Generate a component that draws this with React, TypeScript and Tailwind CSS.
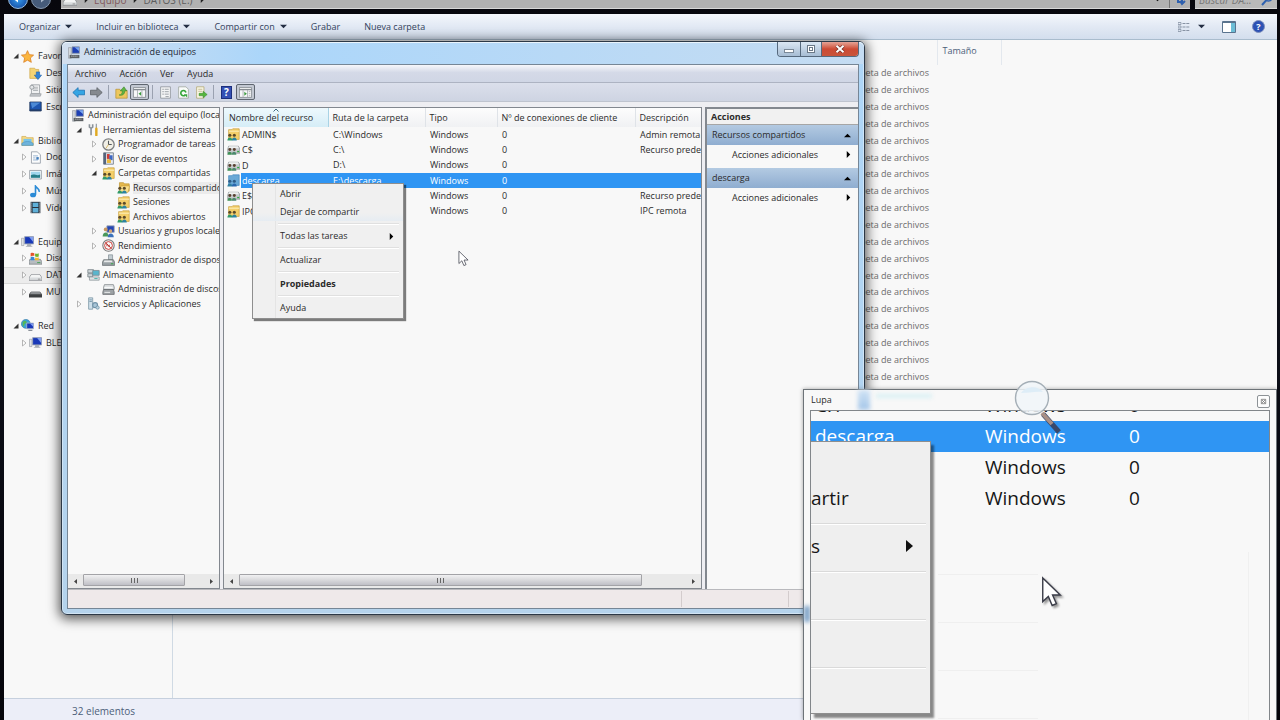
import React from "react";

type IconProps = { className?: string };
type IconType = (p: IconProps) => React.ReactElement;

function make(children: React.ReactNode): IconType {
  return function Icon({ className }: IconProps) {
    return (
      <svg viewBox="0 0 16 16" aria-hidden="true" className={`shrink-0 ${className ?? "size-[13px]"}`}>
        {children}
      </svg>
    );
  };
}

const people = (
  <>
    <circle cx="3.500" cy="9" r="1.900" fill="#5a4a2a" />
    <path d="M.5 15.500c0-5 6-5 6 0z" fill="#2f9a6a" />
    <circle cx="9" cy="9" r="1.900" fill="#5a4a2a" />
    <path d="M6 15.500c0-5 6-5 6 0z" fill="#2c83a0" />
  </>
);

const ConsoleIcon = make(
  <>
    <path d="M0.5 2h3.500v13H0.5z" fill="#d5d9dd" stroke="#8a9096" strokeWidth=".7" />
    <path d="M5 1h9v8H5z" fill="#1d3fb4" stroke="#8f98a6" />
    <path d="M8 1.500h5.500V6z" fill="#7aa6ee" />
    <path d="M2 11h12v4H2z" fill="#5c6063" />
    <path d="M4 12.500h8" stroke="#d8dadc" strokeDasharray="1.500 1" />
  </>
);
const ToolsIcon = make(
  <>
    <path d="M5 6v9M3 1.500v3.500l2 1.500 2-1.500V1.500" fill="none" stroke="#8b9299" strokeWidth="2" />
    <path d="M11.500 1v6" stroke="#9aa1a8" strokeWidth="1.600" />
    <path d="M11.500 7v8" stroke="#e0a921" strokeWidth="3" strokeLinecap="round" />
  </>
);
const ClockIcon = make(
  <>
    <circle cx="8" cy="8" r="7" fill="#f1efe6" stroke="#7d7f80" strokeWidth="1.600" />
    <path d="M8 3.500V8h4" fill="none" stroke="#545a60" strokeWidth="1.300" />
    <path d="M8 8l-3 4.500" stroke="#d1ae4d" />
  </>
);
const EventIcon = make(
  <>
    <path d="M2 1h12v14H2z" fill="#e9ecf2" stroke="#6d7683" />
    <path d="M2 1h3v14H2z" fill="#55657e" />
    <path d="M6 2.500h3.500v6H6z" fill="#cf3c35" />
    <path d="M9 4h4v6H9z" fill="#3e68c4" />
    <path d="M6 9h5v4.500H6z" fill="#e9b83b" />
  </>
);
const SharedFolderIcon = make(
  <>
    <path d="M2 2h4l1-1h8v13H2z" fill="#f4cf6a" stroke="#c59a35" strokeWidth=".8" />
    <path d="M2.500 4h12.500" stroke="#fbe8a8" strokeWidth="1.600" />
    {people}
  </>
);
const OpenSharedIcon = make(
  <>
    <path d="M3 2h5l1 1.500h6v9H3z" fill="#e5b84e" stroke="#b98f2c" strokeWidth=".8" />
    <path d="M5 6h10.500l-2 8H2z" fill="#fadf8c" stroke="#c59a35" strokeWidth=".7" />
    {people}
  </>
);
const SelectedFolderIcon = make(
  <>
    <path d="M2 2h4l1-1h8v13H2z" fill="#6aa9d6" stroke="#4083bb" strokeWidth=".8" />
    <circle cx="3.500" cy="9" r="1.900" fill="#2f5c86" />
    <path d="M.5 15.500c0-5 6-5 6 0z" fill="#2f7fa0" />
    <circle cx="9" cy="9" r="1.900" fill="#2f5c86" />
    <path d="M6 15.500c0-5 6-5 6 0z" fill="#2a68ae" />
  </>
);
const SharedDriveIcon = make(
  <>
    <path d="M2 4h12l2 3.500v5H1v-5z" fill="#c6cacd" stroke="#777d82" strokeWidth=".8" />
    <path d="M2.500 4h11l1 2.500h-13z" fill="#eef0f1" />
    <path d="M12.500 10.500h2.500" stroke="#2fa83e" strokeWidth="1.600" />
    <circle cx="3.500" cy="8" r="1.800" fill="#5a4130" />
    <path d="M.5 14.500c0-5 5.500-5 5.500 0z" fill="#3f8f57" />
    <circle cx="9" cy="8" r="1.800" fill="#5a4130" />
    <path d="M6 14.500c0-5 5.500-5 5.500 0z" fill="#4b8a6c" />
  </>
);
const UsersIcon = make(
  <>
    <path d="M6 1h9v8H6z" fill="#2547b4" stroke="#98a1b0" />
    <circle cx="4.500" cy="5.500" r="2.300" fill="#c99760" />
    <path d="M.8 14c0-6.500 7.400-6.500 7.400 0z" fill="#49985b" />
    <circle cx="10.500" cy="7.500" r="2.200" fill="#d6a773" />
    <path d="M7 15c0-6 7.500-6 7.500 0z" fill="#3c72bb" />
  </>
);
const PerfIcon = make(
  <>
    <circle cx="8" cy="8" r="7" fill="#fafafa" stroke="#777" strokeWidth="1.300" />
    <circle cx="8" cy="8" r="4.800" fill="none" stroke="#c93b35" strokeWidth="1.200" />
    <path d="M4.500 4.500l7 7M6 9V6l3 4V7" fill="none" stroke="#b9302c" strokeWidth="1" />
  </>
);
const DeviceIcon = make(
  <>
    <path d="M8 1h5v6H8z" fill="#c3cdd2" stroke="#7a858c" strokeWidth=".8" />
    <path d="M2 7h12l1.500 3v4H.5v-4z" fill="#9aa1a5" stroke="#5b6165" strokeWidth=".8" />
    <path d="M3 8h9l1 2H2z" fill="#e7e9ea" />
    <path d="M11 12h3" stroke="#37a648" strokeWidth="1.200" />
  </>
);
const StorageIcon = make(
  <>
    <path d="M1 2h7v4H1zM1 7h6v4H1z" fill="#cfd6d9" stroke="#6f7a80" strokeWidth=".9" />
    <path d="M7 3h8v6H7z" fill="#59b5cd" stroke="#7b8a91" />
    <path d="M3 11h12v4H3z" fill="#dfe3e5" stroke="#7c868c" strokeWidth=".8" />
    <path d="M9 13h4" stroke="#2aa9a0" />
  </>
);
const DisksIcon = make(
  <>
    <path d="M3 2h11l1 3v3H2V5z" fill="#dfe2e4" stroke="#6c7276" strokeWidth=".8" />
    <path d="M2 8h12l1 3v3H1v-3z" fill="#9da2a5" stroke="#565b5e" strokeWidth=".8" />
    <path d="M3 5.500h10M3 11.500h7" stroke="#fff" />
  </>
);
const ServicesIcon = make(
  <>
    <path d="M2 1h5v14H2z" fill="#cfe0ea" stroke="#7e97a6" />
    <path d="M3 3.500h3M3 5.500h3" stroke="#6b8ca0" />
    <circle cx="10" cy="10" r="3" fill="#a8c5d7" stroke="#6f92a8" strokeWidth="1.400" />
    <circle cx="13" cy="13" r="2" fill="#bcd3e0" stroke="#6f92a8" />
  </>
);
const StarIcon = make(
  <path d="M8 .8l2.200 4.900 5.300.6-4 3.600 1.200 5.300L8 12.500l-4.700 2.700 1.200-5.300-4-3.600 5.300-.6z" fill="#fbb640" stroke="#d9781c" strokeWidth=".9" />
);
const DownloadIcon = make(
  <>
    <path d="M1 1.500h6l1 1.500h4v11H1z" fill="#f4d474" stroke="#cda440" strokeWidth=".8" />
    <path d="M9 6h4v4h2.500L11 15.500 6.500 10H9z" fill="#2f83d8" stroke="#1d5fa8" strokeWidth=".7" />
  </>
);
const RecentIcon = make(
  <>
    <path d="M3 1h10v11H3z" fill="#f0f1f2" stroke="#989da1" />
    <path d="M5 4h6M5 6h6M5 8h6" stroke="#a4a9ad" />
    <circle cx="3.500" cy="4" r="2.500" fill="#e5e7e9" stroke="#8c9296" />
    <path d="M2 12h13l-1 3H1z" fill="#c4c8cb" stroke="#8c9296" strokeWidth=".7" />
  </>
);
const DesktopIcon = make(
  <>
    <path d="M1 2.500h14v11H1z" fill="#1e56b0" stroke="#1a3157" />
    <path d="M2 3l12 0-10 7z" fill="#4c8ad6" />
    <path d="M1 12.500h14" stroke="#233d68" strokeWidth="2" />
  </>
);
const LibraryIcon = make(
  <>
    <path d="M1 3h5l1 1.500h8V14H1z" fill="#f5d982" stroke="#cda84c" strokeWidth=".8" />
    <path d="M3 6h10v5H3z" fill="#79c4ea" />
    <path d="M1 11.500c4-3 10-3 14 0V14H1z" fill="#6fb4dc" stroke="#4d93bd" strokeWidth=".7" />
  </>
);
const DocIcon = make(
  <>
    <path d="M3 1h7l4 3.500V15H3z" fill="#fbfcfd" stroke="#9099a2" />
    <path d="M5 6h6M5 8.500h3M5 11h6" stroke="#85a3c4" />
    <path d="M9 7.500h3v3H9z" fill="#3f7dbb" />
  </>
);
const ImageIcon = make(
  <>
    <path d="M.8 3h14.400v10.500H.8z" fill="#fff" stroke="#8b949c" />
    <path d="M2.300 4.500h11.400V12H2.300z" fill="#9fd5ec" />
    <path d="M2.300 9c4-3 7 1.500 11.400-1V12H2.300z" fill="#267d88" />
  </>
);
const MusicIcon = make(
  <>
    <path d="M8 12V1.500c2 3 5 2.500 4.500 7" fill="none" stroke="#2b8bd6" strokeWidth="2" />
    <ellipse cx="5" cy="12.300" rx="3.700" ry="2.800" fill="#2b8bd6" />
  </>
);
const VideoIcon = make(
  <>
    <path d="M2 1h12v14H2z" fill="#26323e" />
    <path d="M4.500 2h7v5.500h-7zM4.500 8.500h7V14h-7z" fill="#5fb0d8" />
    <path d="M3.200 2v13M12.800 2v13" stroke="#d6dce0" strokeDasharray="1.200 1.200" />
  </>
);
const PcIcon = make(
  <>
    <path d="M.6 4h3v9h-3z" fill="#dfe2e6" stroke="#8f959c" strokeWidth=".7" />
    <path d="M4.500 2h11v9h-11z" fill="#1838b8" stroke="#9aa3b3" />
    <path d="M10 2.500h5v6z" fill="#809ef0" />
    <path d="M8 11.500h4v2H8zM6 14h8" fill="#a8adb5" stroke="#a8adb5" />
  </>
);
const WindowsDriveIcon = make(
  <>
    <path d="M1 9h13l2 3v3H0v-3z" fill="#b7bcc0" stroke="#73787c" strokeWidth=".8" />
    <path d="M2 1.500c2-1 3-.5 4.500 0V5C5 4.500 4 4.500 2 5.500z" fill="#e5532d" />
    <path d="M7.500 1.800c2 .7 3 .5 4.500-.3v4c-1.500.8-2.500.8-4.500 0z" fill="#6fb42f" />
    <path d="M2 6.500c2-1 3-.5 4.500 0V10H2z" fill="#3a87d6" />
    <path d="M7.500 6.700c2 .7 3 .5 4.500-.3V10H7.500z" fill="#f2b92d" />
    <path d="M10 13h4" stroke="#36a148" />
  </>
);
const DriveIcon = make(
  <>
    <path d="M2.500 7h11L16 11v3H0v-3z" fill="#d9dcde" stroke="#7c8185" strokeWidth=".8" />
    <path d="M3 7.500h10l2 3H1z" fill="#f3f4f4" />
    <path d="M11 12.500h3" stroke="#888" />
  </>
);
const UsbIcon = make(
  <>
    <path d="M2.500 7h11L16 10v4H0v-4z" fill="#3d3f41" />
    <path d="M3 7h10l2 3H1z" fill="#8d9093" />
  </>
);
const NetworkIcon = make(
  <>
    <circle cx="6" cy="6" r="5.500" fill="#3aa0dc" stroke="#23729f" strokeWidth=".7" />
    <path d="M2 4c2-3 5-2 5 0s-3 1-3 4-2 0-2-1z" fill="#55b757" />
    <path d="M7 5h8.500v7H7z" fill="#1838b8" stroke="#b2bac8" />
    <path d="M11 5.500h4v4z" fill="#809ef0" />
    <path d="M9 14h5" stroke="#8a9098" strokeWidth="1.500" />
  </>
);

const BackArrow = make(<path d="M1 8l6.500-6v3.200H15.500v5.600H7.500V14z" fill="#35a5e4" stroke="#1d74b4" />);
const ForwardArrow = make(<path d="M15 8L8.500 2v3.200H.5v5.600h8V14z" fill="#85898f" stroke="#5d6166" />);
const FolderUpIcon = make(
  <>
    <path d="M1 4h5l1 1.500h8V15H1z" fill="#edc75d" stroke="#b38d2d" strokeWidth=".8" />
    <path d="M5 11c3 0 4-2 4-5H6.500L11 1l3.500 5H12c0 4-3 6.500-7 5z" fill="#5fb545" stroke="#3c8228" strokeWidth=".7" />
  </>
);
const PropsIcon = make(
  <>
    <path d="M2 1h12v14H2z" fill="#f4f5f6" stroke="#8d9399" />
    <path d="M4 4h2M7 4h5M4 7h2M7 7h5M4 10h2M7 10h5M8 13h4" stroke="#8d9399" />
  </>
);
const RefreshIcon = make(
  <>
    <path d="M2 1h9l3 3v11H2z" fill="#fafbfa" stroke="#a0a7a0" />
    <path d="M11 8a3.200 3.200 0 1 0-1 3.200" fill="none" stroke="#36a63a" strokeWidth="2" />
    <path d="M8.500 10h4v4z" fill="#36a63a" />
  </>
);
const ExportIcon = make(
  <>
    <path d="M2 1h9v14H2z" fill="#fbf8e6" stroke="#b1a978" />
    <path d="M4 4h5M4 6.500h5" stroke="#b9b189" />
    <path d="M5 9h5V6.500l5 4-5 4V12H5z" fill="#55b63f" stroke="#35832a" strokeWidth=".6" />
  </>
);
const PaneIcon = make(
  <>
    <path d="M.5 2h15v12H.5z" fill="#f7f8f9" stroke="#80868c" />
    <path d="M.5 4.500h15" stroke="#80868c" strokeWidth="1.500" />
    <path d="M5.500 5v9M11 5v9" stroke="#a3a8ad" />
    <path d="M10 7v5L6.800 9.500z" fill="#3b9b3d" />
  </>
);
const PaneRightIcon = make(
  <>
    <path d="M.5 2h15v12H.5z" fill="#f7f8f9" stroke="#80868c" />
    <path d="M.5 4.500h15" stroke="#80868c" strokeWidth="1.500" />
    <path d="M5 5v9M10.500 5v9" stroke="#a3a8ad" />
    <path d="M6.500 7v5l3.200-2.500z" fill="#3b9b3d" />
    <path d="M12 7h2M12 9.500h2M12 12h2" stroke="#8a9095" strokeWidth=".8" />
  </>
);

function Arrow({ open }: { open?: boolean }) {
  return (
    <svg viewBox="0 0 6 8" aria-hidden="true" className="h-2 w-1.5 shrink-0">
      {open ? (
        <path d="M5.500 1.500v5h-5z" fill="#333" />
      ) : (
        <path d="M1.500 1l3.500 3-3.500 3z" fill="#fff" stroke="#a3a3a3" strokeWidth=".8" />
      )}
    </svg>
  );
}
function Tri({ dir, className = "text-black" }: { dir: "up" | "down" | "left" | "right"; className?: string }) {
  const d = { up: "M0 6l4-4 4 4z", down: "M0 2h8L4 6z", left: "M6 0v8L2 4z", right: "M2 0l4 4-4 4z" }[dir];
  return (
    <svg viewBox="0 0 8 8" aria-hidden="true" className={`size-[7px] shrink-0 fill-current ${className}`}>
      <path d={d} />
    </svg>
  );
}
function Pointer({ className }: IconProps) {
  return (
    <svg viewBox="0 0 12 18" aria-hidden="true" className={className}>
      <path d="M1 1v13.500l3.200-3 2.200 5.200 2.400-1-2.200-5h4.400z" fill="#fff" stroke="#3a3c48" strokeWidth=".8" />
    </svg>
  );
}

/* ---------- Explorer window ---------- */

type Node = { t: string; icon: IconType; lvl: number; open?: boolean; leaf?: boolean; sel?: boolean } | null;

const places: Node[] = [
  { t: "Favoritos", icon: StarIcon, lvl: 0, open: true },
  { t: "Descargas", icon: DownloadIcon, lvl: 1, leaf: true },
  { t: "Sitios recientes", icon: RecentIcon, lvl: 1, leaf: true },
  { t: "Escritorio", icon: DesktopIcon, lvl: 1, leaf: true },
  null,
  { t: "Bibliotecas", icon: LibraryIcon, lvl: 0, open: true },
  { t: "Documentos", icon: DocIcon, lvl: 1 },
  { t: "Imágenes", icon: ImageIcon, lvl: 1 },
  { t: "Música", icon: MusicIcon, lvl: 1 },
  { t: "Vídeos", icon: VideoIcon, lvl: 1 },
  null,
  { t: "Equipo", icon: PcIcon, lvl: 0, open: true },
  { t: "Disco local (C:)", icon: WindowsDriveIcon, lvl: 1 },
  { t: "DATOS (E:)", icon: DriveIcon, lvl: 1, sel: true },
  { t: "MULTIMEDIA (F:)", icon: UsbIcon, lvl: 1 },
  null,
  { t: "Red", icon: NetworkIcon, lvl: 0, open: true },
  { t: "BLESS", icon: PcIcon, lvl: 1 },
];

function Explorer() {
  return (
    <section aria-label="Explorador" className="absolute inset-0 flex flex-col pr-[3px] pl-[4px]">
      <div className="flex h-[14px] shrink-0 items-end overflow-hidden pb-[5px]">
        <button aria-label="Atrás" className="ml-1 size-5 shrink-0 rounded-full border border-[#9cc0e0] bg-radial from-[#3aa0f0] to-[#123a94]">
          <svg viewBox="0 0 20 20"><path d="M4 9l6-5v3h6v4h-6v3z" fill="#fff" /></svg>
        </button>
        <button aria-label="Adelante" className="ml-[3px] size-5 shrink-0 rounded-full border border-[#8799b0] bg-[#465b7a]">
          <svg viewBox="0 0 20 20"><path d="M16 9l-6-5v3H4v4h6v3z" fill="#a9b8cc" /></svg>
        </button>
        <div className="ml-2.5 flex h-[18px] min-w-0 flex-1 items-center border-b border-[#d8d8d8] bg-[#b1b1b1] text-[10px] text-[#5d5d5d]">
          <DriveIcon className="ml-0.5 size-[14px]" />
          <Tri dir="right" className="ml-1.5 text-[#222]" />
          <a href="#equipo" className="ml-1 text-[#80585c]">Equipo</a>
          <Tri dir="right" className="ml-1.5 text-[#222]" />
          <a href="#datos" className="ml-1">DATOS (E:)</a>
          <Tri dir="right" className="ml-1.5 text-[#222]" />
          <span className="flex-1" />
          <Tri dir="down" className="mr-2 text-[#111]" />
          <button aria-label="Actualizar" className="flex h-full w-[21px] items-center justify-center border-l border-[#777]">
            <svg viewBox="0 0 12 12" className="size-3"><path d="M1 4h3v4l3 0M8 2v7M6 7l2 3 3-3" fill="none" stroke="#2d5fae" strokeWidth="2" /></svg>
          </button>
        </div>
        <div className="ml-[5px] flex h-[18px] w-[82px] items-center border-b border-[#d8d8d8] bg-[#b9b9b9] px-1">
          <input aria-label="Buscar" placeholder="Buscar DA..." className="w-full min-w-0 bg-transparent text-[10px] italic placeholder:text-[#777]" />
          <svg viewBox="0 0 12 12" className="size-3 shrink-0"><circle cx="7.500" cy="4" r="3" fill="none" stroke="#2f62b0" strokeWidth="1.500" /><path d="M5.500 6L1 11" stroke="#2f62b0" strokeWidth="2" /></svg>
        </div>
      </div>

      <div className="flex h-[26px] shrink-0 items-center border-b border-[#a9bccd] bg-linear-to-b from-[#f4f7fc] via-[#e2e9f4] to-[#d3deed] pl-[15px] text-[#33425c]">
        <button className="flex items-center gap-[5px]">Organizar <Tri dir="down" className="text-[#222d42]" /></button>
        <button className="ml-6 flex items-center gap-[5px]">Incluir en biblioteca <Tri dir="down" className="text-[#222d42]" /></button>
        <button className="ml-6 flex items-center gap-[5px]">Compartir con <Tri dir="down" className="text-[#222d42]" /></button>
        <button className="ml-6">Grabar</button>
        <button className="ml-6">Nueva carpeta</button>
        <span className="flex-1" />
        <button aria-label="Cambiar la vista" className="flex items-center gap-2">
          <svg viewBox="0 0 12 12" className="size-3"><path d="M0 1.500h3v2H0zM0 5h3v2H0zM0 8.500h3v2H0z" fill="none" stroke="#8792a3" strokeWidth=".8" /><path d="M4.500 2.500h7M4.500 6h7M4.500 9.500h7" stroke="#8792a3" strokeDasharray="3 .8" /></svg>
          <Tri dir="down" className="text-[#222d42]" />
        </button>
        <button aria-label="Panel de vista previa" className="ml-[17px]">
          <svg viewBox="0 0 14 12" className="h-3 w-[14px]"><path d="M.5.500h13v11H.5z" fill="#fff" stroke="#59738e" /><path d="M9 1h4v10H9z" fill="#6cbdd6" /><path d="M.5 1.500h13" stroke="#59738e" /></svg>
        </button>
        <button aria-label="Ayuda" className="mr-3 ml-4 flex size-[13px] items-center justify-center rounded-full border border-[#7f90bd] bg-[#2c51b4] text-[9px] leading-none font-bold text-white">?</button>
      </div>

      <div className="flex min-h-0 flex-1 bg-[#f8f8f8]">
        <nav aria-label="Carpetas" className="w-[169px] shrink-0 overflow-hidden border-r border-[#d0dae4] pt-2">
          <ul className="grid h-[303px] auto-rows-fr">
            {places.map((n, i) =>
              n ? (
                <li key={i}>
                  <button className={`flex size-full items-center whitespace-nowrap ${n.lvl ? "pl-[17px]" : "pl-[9px]"} ${n.sel ? "border-y border-[#d9d9d9] bg-[#ececec]" : ""}`}>
                    {n.leaf ? <span className="w-1.5" /> : <Arrow open={n.open} />}
                    <n.icon className="ml-0.5 size-[13px]" />
                    <span className="ml-1">{n.t}</span>
                  </button>
                </li>
              ) : (
                <li key={i} aria-hidden="true" />
              ),
            )}
          </ul>
        </nav>
        <div className="min-w-0 flex-1 overflow-hidden text-[#6d6d6d]">
          <table className="h-[362px] w-[828px] table-fixed text-left">
            <thead>
              <tr className="h-[25px] text-[#4c607a]">
                <th className="w-[663px] font-normal" aria-label="Nombre" />
                <th className="w-[101px] border-r border-[#e3e8ee] font-normal" aria-label="Tipo" />
                <th className="w-[64px] border-r border-[#e3e8ee] pb-1 pl-[5px] font-normal">Tamaño</th>
              </tr>
            </thead>
            <tbody>
              {Array.from({ length: 20 }, (_, i) => (
                <tr key={i}>
                  <td />
                  <td className="pr-2 text-right whitespace-nowrap">Carpeta de archivos</td>
                  <td />
                </tr>
              ))}
            </tbody>
          </table>
        </div>
      </div>

      <footer className="flex h-[22px] shrink-0 items-center border-t border-[#c6d0de] bg-[#eceef8] pt-0.5 pl-[68px] text-[10px] text-[#4c607a]">
        32 elementos
      </footer>
    </section>
  );
}

/* ---------- Computer management window ---------- */

const tree: Exclude<Node, null>[] = [
  { t: "Administración del equipo (local)", icon: ConsoleIcon, lvl: 0 },
  { t: "Herramientas del sistema", icon: ToolsIcon, lvl: 1, open: true },
  { t: "Programador de tareas", icon: ClockIcon, lvl: 2 },
  { t: "Visor de eventos", icon: EventIcon, lvl: 2 },
  { t: "Carpetas compartidas", icon: SharedFolderIcon, lvl: 2, open: true },
  { t: "Recursos compartidos", icon: OpenSharedIcon, lvl: 3, leaf: true, sel: true },
  { t: "Sesiones", icon: SharedFolderIcon, lvl: 3, leaf: true },
  { t: "Archivos abiertos", icon: SharedFolderIcon, lvl: 3, leaf: true },
  { t: "Usuarios y grupos locales", icon: UsersIcon, lvl: 2 },
  { t: "Rendimiento", icon: PerfIcon, lvl: 2 },
  { t: "Administrador de dispositivos", icon: DeviceIcon, lvl: 2, leaf: true },
  { t: "Almacenamiento", icon: StorageIcon, lvl: 1, open: true },
  { t: "Administración de discos", icon: DisksIcon, lvl: 2, leaf: true },
  { t: "Servicios y Aplicaciones", icon: ServicesIcon, lvl: 1 },
];
const indent = ["pl-1", "pl-2", "pl-[23px]", "pl-[38px]"];

const shares = [
  { n: "ADMIN$", icon: SharedFolderIcon, p: "C:\\Windows", d: "Admin remota" },
  { n: "C$", icon: SharedDriveIcon, p: "C:\\", d: "Recurso predeterminado" },
  { n: "D", icon: SharedDriveIcon, p: "D:\\", d: "" },
  { n: "descarga", icon: SelectedFolderIcon, p: "E:\\descarga", d: "", sel: true },
  { n: "E$", icon: SharedDriveIcon, p: "E:\\", d: "Recurso predeterminado" },
  { n: "IPC$", icon: SharedFolderIcon, p: "", d: "IPC remota" },
];

function ScrollArrow({ dir }: { dir: "left" | "right" }) {
  return (
    <svg viewBox="0 0 7 7" aria-hidden="true" className="size-[7px]">
      <path d={dir === "left" ? "M5 1v5L2 3.500z" : "M2 1v5l3-2.500z"} fill="#444" />
    </svg>
  );
}

function HScroll({ thumb }: { thumb: string }) {
  return (
    <div className="flex h-[14px] shrink-0 items-center bg-[#e9e9e9] px-1">
      <button aria-label="Desplazar a la izquierda"><ScrollArrow dir="left" /></button>
      <div className="mx-1 flex h-full flex-1">
        <div className={`flex h-3 items-center justify-center gap-px rounded-[1px] border border-[#a3a3a7] bg-linear-to-b from-[#f1f1f2] via-[#d9d9dc] to-[#bfbfc6] ${thumb}`}>
          <span className="h-[5px] w-px bg-[#666]" />
          <span className="ml-px h-[5px] w-px bg-[#666]" />
          <span className="ml-px h-[5px] w-px bg-[#666]" />
        </div>
      </div>
      <button aria-label="Desplazar a la derecha"><ScrollArrow dir="right" /></button>
    </div>
  );
}

function ToolButton({ label, icon: Icon, on }: { label: string; icon: IconType; on?: boolean }) {
  return (
    <button
      aria-label={label}
      className={`flex h-4 items-center justify-center rounded-[2px] ${on ? "w-[19px] border border-[#5f6670] bg-[#c3c8d2]" : "w-[18px]"}`}
    >
      <Icon />
    </button>
  );
}
const Sep = () => <span className="mx-[3px] h-[14px] w-px bg-[#9aa1b0]" />;

function Management() {
  const th = "border-r border-[#dfe3e8] pl-1 font-normal whitespace-nowrap";
  const td = "overflow-hidden pl-[5px] whitespace-nowrap";
  return (
    <section
      aria-label="Administración de equipos"
      className="absolute top-[41px] left-[61px] flex h-[574px] w-[804px] flex-col rounded-[6px] border border-[#2c3846] bg-linear-to-b from-[#aed6f8] to-[#b5d3ec] px-[5px] pb-[5px] shadow-[0_2px_12px_2px_rgba(0,0,0,0.65)] ring-1 ring-white/40 ring-inset"
    >
      <header className="-mx-[5px] flex h-[22px] shrink-0 items-start rounded-t-[5px] bg-linear-to-r from-[#d3dfee] via-[#abd6fa] via-25% to-[#c5dcf2] pl-1.5 shadow-[inset_0_1px_0_#eaf4fc]">
        <ConsoleIcon className="mt-1 size-[13px]" />
        <h1 className="mt-[3px] ml-[3px] leading-[14px] text-[#1c2733]">Administración de equipos</h1>
        <span className="flex-1" />
        <div className="mr-[5px] flex h-[15px] overflow-hidden rounded-b-[4px] border border-t-0 border-[#56697d]">
          <button aria-label="Minimizar" className="flex w-[22px] items-center justify-center bg-linear-to-b from-[#dbe7f3] to-[#a7bdd4]">
            <span className="mt-1 h-[4px] w-[10px] border border-[#7b8998] bg-white" />
          </button>
          <button aria-label="Maximizar" className="flex w-[21px] items-center justify-center border-l border-[#56697d] bg-linear-to-b from-[#dbe7f3] to-[#a7bdd4]">
            <span className="flex size-2 items-center justify-center border border-[#6b7988] bg-white"><span className="size-1 border border-[#6b7988]" /></span>
          </button>
          <button aria-label="Cerrar" className="flex w-[37px] items-center justify-center border-l border-[#56697d] bg-linear-to-b from-[#e4a396] via-[#cc4a34] to-[#c8553b]">
            <svg viewBox="0 0 10 8" className="h-2 w-2.5"><path d="M1.500.8l7 6.400M8.500.8l-7 6.400" stroke="#6b2a22" strokeWidth="3.200" /><path d="M1.500.8l7 6.400M8.500.8l-7 6.400" stroke="#fff" strokeWidth="2" /></svg>
          </button>
        </div>
      </header>

      <div className="flex min-h-0 flex-1 flex-col border border-[#768696] bg-[#eeeef2]">
        <nav aria-label="Menú" className="flex h-[18px] shrink-0 items-center border-b border-[#adb3c2] bg-linear-to-b from-[#f6f7fb] via-[#d4d9e7] via-45% to-[#d0d6e5] pl-[7px]">
          <button>Archivo</button>
          <button className="ml-[13px]">Acción</button>
          <button className="ml-[13px]">Ver</button>
          <button className="ml-[13px]">Ayuda</button>
        </nav>
        <div className="flex h-[19px] shrink-0 items-center border-b border-[#bfc4cf] bg-linear-to-b from-[#dbdfeb] to-[#ced4e2] pl-[1px]">
          <ToolButton label="Atrás" icon={BackArrow} />
          <ToolButton label="Adelante" icon={ForwardArrow} />
          <Sep />
          <ToolButton label="Subir un nivel" icon={FolderUpIcon} />
          <ToolButton label="Mostrar árbol" icon={PaneIcon} on />
          <Sep />
          <ToolButton label="Propiedades" icon={PropsIcon} />
          <ToolButton label="Actualizar" icon={RefreshIcon} />
          <ToolButton label="Exportar lista" icon={ExportIcon} />
          <Sep />
          <button aria-label="Ayuda" className="mx-[4px] flex h-[13px] w-[11px] items-center justify-center border border-[#1d2f7c] bg-[#3450b4] text-[10px] leading-none font-bold text-white">?</button>
          <ToolButton label="Mostrar panel de acciones" icon={PaneRightIcon} on />
        </div>

        <div className="flex min-h-0 flex-1 pt-[5px]">
          <div className="flex w-[152px] shrink-0 flex-col border border-l-0 border-[#83888f] bg-[#f8f8f8]">
            <ul className="grid h-[203px] auto-rows-fr">
              {tree.map((n) => (
                <li key={n.t} className="min-w-0 overflow-hidden">
                  <button className={`flex size-full items-center whitespace-nowrap ${indent[n.lvl]}`}>
                    {n.lvl > 0 && <span className="mr-[5px] flex w-1.5 shrink-0">{!n.leaf && <Arrow open={n.open} />}</span>}
                    <n.icon />
                    <span className={`ml-[3px] flex-1 text-left ${n.sel ? "bg-[#ebebeb]" : ""}`}>{n.t}</span>
                  </button>
                </li>
              ))}
            </ul>
            <span className="flex-1" />
            <HScroll thumb="w-[102px]" />
          </div>

          <div className="ml-[3px] flex min-w-0 flex-1 flex-col border border-[#83888f] bg-[#f8f8f8]">
            <div className="overflow-hidden">
              <table className="h-[111px] w-[529px] table-fixed text-left">
                <thead>
                  <tr className="h-[19px] bg-linear-to-b from-[#fdfdfd] to-[#f0f1f3]">
                    <th className="relative w-[104px] border-r border-[#a9d3e5] bg-linear-to-b from-[#eef9fd] to-[#d5edf7] pl-[5px] font-normal whitespace-nowrap">
                      Nombre del recurso
                      <svg viewBox="0 0 6 4" className="absolute top-0 left-[49px] h-1 w-1.5"><path d="M.5 3.500L3 1l2.500 2.500" fill="none" stroke="#41687c" /></svg>
                    </th>
                    <th className={`w-[97px] ${th}`}>Ruta de la carpeta</th>
                    <th className={`w-[72px] ${th}`}>Tipo</th>
                    <th className={`w-[138px] ${th}`}>Nº de conexiones de cliente</th>
                    <th className={`w-[118px] ${th}`}>Descripción</th>
                  </tr>
                </thead>
                <tbody>
                  {shares.map((s) => (
                    <tr key={s.n} className={s.sel ? "bg-[#2f95f3] text-white" : ""}>
                      <td className={s.sel ? "bg-[#f8f8f8] pl-[3px]" : "pl-[3px]"}>
                        <div className="flex items-center">
                          <s.icon />
                          <span className={`ml-px h-[15px] flex-1 pl-px leading-[15px] ${s.sel ? "bg-[#2f95f3]" : ""}`}>{s.n}</span>
                        </div>
                      </td>
                      <td className={td}>{s.p}</td>
                      <td className={td}>Windows</td>
                      <td className={td}>0</td>
                      <td className={td}>{s.d}</td>
                    </tr>
                  ))}
                </tbody>
              </table>
            </div>
            <span className="flex-1" />
            <HScroll thumb="w-[403px]" />
          </div>

          <aside aria-label="Acciones" className="ml-[3px] w-[153px] shrink-0 border-t-2 border-l-2 border-[#83888f] bg-[#f8f8f8]">
            <h2 className="flex h-4 items-center border-b border-[#a6a6a6] bg-[#f1f1f1] pl-1 font-bold">Acciones</h2>
            {["Recursos compartidos", "descarga"].map((t) => (
              <div key={t}>
                <button className="flex h-5 w-full items-center justify-between bg-linear-to-b from-[#b3cae2] to-[#8fadd0] pr-[7px] pl-[5px]">
                  {t}
                  <Tri dir="up" />
                </button>
                <button className="mb-[4px] flex h-[19px] w-full items-center justify-between pr-1.5 pl-[25px]">
                  Acciones adicionales
                  <Tri dir="right" />
                </button>
              </div>
            ))}
          </aside>
        </div>
        <footer className="flex h-[19px] shrink-0 justify-end border-t border-[#b9b9bd] bg-[#efe9ea]">
          <span className="my-px w-[107px] border-l border-[#d3cccd]" />
          <span className="my-px w-[70px] border-l border-[#d3cccd]" />
        </footer>
      </div>

      <ContextMenu />
      <Pointer className="absolute top-[208px] left-[396px] h-[17px] w-[11px]" />
    </section>
  );
}

function ContextMenu() {
  const item = "relative flex h-[18px] w-full items-center justify-between pr-2 pl-[27px] text-left";
  const line = <hr className="mx-1 my-[2px] ml-[25px] border-t border-b border-t-[#e0e0e0] border-b-white" />;
  return (
    <div role="menu" className="absolute top-[141px] left-[190px] w-[152px] border border-[#8e8e8e] bg-[#f0f0f0] py-px shadow-[2px_2px_1px_rgba(0,0,0,0.5)]">
      <div className="absolute inset-y-0 left-[22px] w-px bg-[#e4e4e4]" />
      <button role="menuitem" className={item}>Abrir</button>
      <button role="menuitem" className={`${item} bg-linear-to-b from-transparent via-transparent via-55% to-[#e6ecf2]`}>Dejar de compartir</button>
      {line}
      <button role="menuitem" className={item}>Todas las tareas <Tri dir="right" /></button>
      {line}
      <button role="menuitem" className={item}>Actualizar</button>
      {line}
      <button role="menuitem" className={`${item} font-bold`}>Propiedades</button>
      {line}
      <button role="menuitem" className={item}>Ayuda</button>
    </div>
  );
}

/* ---------- Magnifier window ---------- */

function Magnifier() {
  const row = "grid h-[31px] grid-cols-[170px_144px_1fr] items-center pl-1";
  const sep = <span className="mr-1 h-[2px] border-t border-[#dadada] bg-white" />;
  return (
    <section aria-label="Lupa" className="absolute top-[389px] right-[3px] bottom-0 flex w-[474px] flex-col border border-b-0 border-[#6d7378] bg-[#f8f8f8] px-1.5 shadow-[0_0_4px_rgba(0,0,0,0.35)]">
      <div className="absolute top-0 left-[54px] h-5 w-3 bg-linear-to-b from-[#cfe3f5] to-[#a5c6e8] blur-[2px]" />
      <div className="absolute top-1 left-[72px] h-1 w-14 bg-[#d8f0f4] blur-[2px]" />
      <div className="absolute top-[216px] left-0 h-4 w-1.5 bg-[#7aa0c6] blur-[2px]" />
      <header className="relative flex h-5 shrink-0 items-center pl-px">
        <h2 className="flex-1">Lupa</h2>
        <button aria-label="Cerrar" className="mt-0.5 flex size-[13px] items-center justify-center rounded-[2px] border border-[#8d9296] bg-[#fdfdfd]">
          <svg viewBox="0 0 8 8" className="size-[7px]"><path d="M1.500 1.500h5v5h-5zM2 2l4 4M6 2L2 6" fill="none" stroke="#777" strokeWidth=".9" /></svg>
        </button>
      </header>
      <div className="relative flex-1 overflow-hidden border border-b-0 border-[#82868a] bg-[#f8f8f8] text-[19px] leading-[31px] text-[#161616]">
        <div className="-mt-[21px]">
          <div className={row}><span>C:\</span><span>Windows</span><span>0</span></div>
          <div className={`${row} bg-[#2f95f3] text-white`}><span>descarga</span><span>Windows</span><span>0</span></div>
          <div className={row}><span /><span>Windows</span><span>0</span></div>
          <div className={row}><span /><span>Windows</span><span>0</span></div>
        </div>
        <div className="mt-[60px] ml-[127px] flex w-[100px] flex-col gap-[47px]">
          <span className="h-px bg-[#efefef]" />
          <span className="h-px bg-[#efefef]" />
          <span className="h-px bg-[#efefef]" />
          <span className="h-px bg-[#efefef]" />
        </div>
        <div className="absolute top-[141px] right-5 bottom-0 w-px bg-[#f0f0f0]" />
        <div className="absolute top-[30px] left-0 flex w-[120px] flex-col border border-l-0 border-[#8e8e8e] bg-[#efefef] shadow-[3px_4px_2px_rgba(0,0,0,0.45)]">
          <span className="h-10" />
          <span className="h-[41px] leading-[32px]">artir</span>
          {sep}
          <span className="flex h-[46px] items-center justify-between pr-4 pb-1">
            s
            <svg viewBox="0 0 8 12" className="h-3 w-2"><path d="M0 0l7 6-7 6z" fill="#111" /></svg>
          </span>
          {sep}
          <span className="h-[46px]" />
          {sep}
          <span className="h-[46px]" />
          {sep}
          <span className="h-[44px]" />
        </div>
        <Pointer className="absolute top-[164px] left-[230px] h-[34px] w-[21px] drop-shadow-[2px_2px_1px_rgba(0,0,0,0.4)]" />
      </div>
      <svg viewBox="0 0 50 56" aria-hidden="true" className="absolute -top-[10px] left-[210px] h-14 w-[50px]">
        <path d="M29 34L45 52" stroke="#39496b" strokeWidth="5" />
        <path d="M28 33L38 44" stroke="#a88f86" strokeWidth="4" />
        <circle cx="18" cy="18" r="16.500" fill="#f1f6f9" fillOpacity=".85" stroke="#a5afb7" strokeWidth="1.400" />
        <path d="M7 13c5-7 17-8 22-1-7-1-15 1-22 1z" fill="#deedf7" />
      </svg>
    </section>
  );
}

export default function App() {
  return (
    <main className="relative h-screen w-full overflow-hidden bg-linear-to-b from-[#07070d] via-[#0d0f18] to-[#05050b] font-['Open_Sans','Noto_Sans',sans-serif] text-[9px] leading-3 text-[#2b2b2b]">
      <Explorer />
      <Management />
      <Magnifier />
    </main>
  );
}
